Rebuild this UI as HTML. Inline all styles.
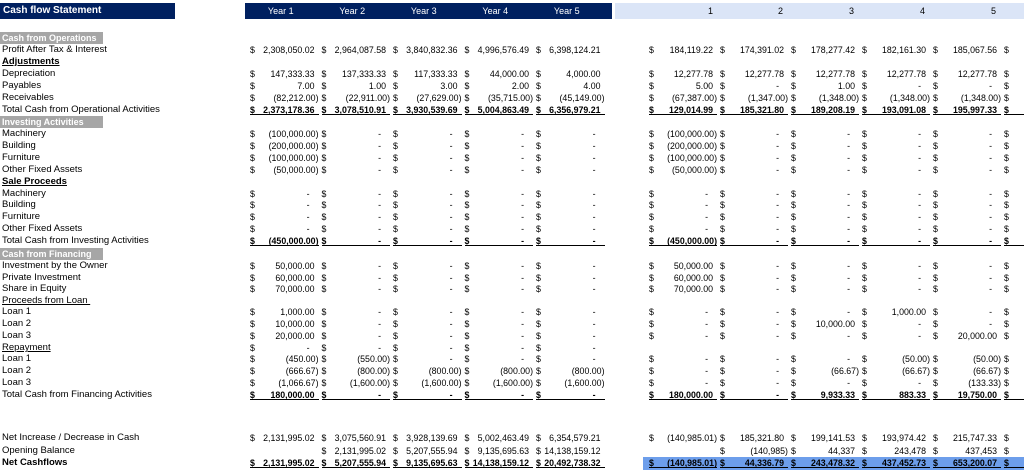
<!DOCTYPE html>
<html><head><meta charset="utf-8"><style>
body{margin:0;width:1024px;height:473px;overflow:hidden;background:#fff;font-family:"Liberation Sans",Arial,sans-serif;font-size:8.8px;color:#000;position:relative}
.r{position:absolute;left:0;height:12px;line-height:12px;display:flex;white-space:nowrap}
.l{width:247px;padding-left:2px;box-sizing:border-box;font-size:9.5px}
.y{width:71.5px;flex:none}
.m{width:71px;flex:none}
.sp{width:41.5px;flex:none}
.c{display:flex;justify-content:space-between;margin-left:3px;padding-right:4px;height:11px;line-height:12px;box-sizing:border-box}
.y .c{width:68.5px}.m .c{width:68px}
.n .c{padding-right:0}
.z .c{padding-right:9px}
.t .c{border-bottom:1px solid #000}
.t{font-weight:bold}
.g{position:absolute;left:0;width:103px;height:12px;background:#a6a6a6;color:#fff;font-weight:bold;line-height:12px;padding-left:2px;box-sizing:border-box;font-size:9px}
.u{font-weight:bold;text-decoration:underline}
.uu{text-decoration:underline}
.hd{position:absolute;top:3px;height:16px;line-height:16px;color:#fff;font-size:9px}
</style></head><body>
<div class="hd" style="left:0;width:175px;background:#002060;font-weight:bold;font-size:10px;padding-left:3px;box-sizing:border-box">Cash flow Statement</div>
<div class="hd" style="left:245px;width:367px;background:#002060;display:flex">
<span style="width:71.5px;text-align:center">Year 1</span><span style="width:71.5px;text-align:center">Year 2</span><span style="width:71.5px;text-align:center">Year 3</span><span style="width:71.5px;text-align:center">Year 4</span><span style="width:71.5px;text-align:center">Year 5</span></div>
<div class="hd" style="left:615px;width:409px;background:#dbe5f7;color:#000;display:flex">
<span style="width:98px;text-align:right">1</span><span style="width:70px;text-align:right">2</span><span style="width:71px;text-align:right">3</span><span style="width:71px;text-align:right">4</span><span style="width:71px;text-align:right">5</span></div>

<div class="g" style="top:32px">Cash from Operations</div>
<div class="r" style="top:44px"><span class="l">Profit After Tax &amp; Interest</span>
<span class="y"><span class="c">$<span>2,308,050.02</span></span></span><span class="y"><span class="c">$<span>2,964,087.58</span></span></span><span class="y"><span class="c">$<span>3,840,832.36</span></span></span><span class="y"><span class="c">$<span>4,996,576.49</span></span></span><span class="y"><span class="c">$<span>6,398,124.21</span></span></span><span class="sp"></span>
<span class="m"><span class="c">$<span>184,119.22</span></span></span><span class="m"><span class="c">$<span>174,391.02</span></span></span><span class="m"><span class="c">$<span>178,277.42</span></span></span><span class="m"><span class="c">$<span>182,161.30</span></span></span><span class="m"><span class="c">$<span>185,067.56</span></span></span><span class="m"><span class="c">$<span>188,067.56</span></span></span></div>
<div class="r" style="top:56px"><span class="l u">Adjustments</span></div>
<div class="r" style="top:68px"><span class="l">Depreciation</span>
<span class="y"><span class="c">$<span>147,333.33</span></span></span><span class="y"><span class="c">$<span>137,333.33</span></span></span><span class="y"><span class="c">$<span>117,333.33</span></span></span><span class="y"><span class="c">$<span>44,000.00</span></span></span><span class="y"><span class="c">$<span>4,000.00</span></span></span><span class="sp"></span>
<span class="m"><span class="c">$<span>12,277.78</span></span></span><span class="m"><span class="c">$<span>12,277.78</span></span></span><span class="m"><span class="c">$<span>12,277.78</span></span></span><span class="m"><span class="c">$<span>12,277.78</span></span></span><span class="m"><span class="c">$<span>12,277.78</span></span></span><span class="m"><span class="c">$<span>12,277.78</span></span></span></div>
<div class="r" style="top:80px"><span class="l">Payables</span>
<span class="y"><span class="c">$<span>7.00</span></span></span><span class="y"><span class="c">$<span>1.00</span></span></span><span class="y"><span class="c">$<span>3.00</span></span></span><span class="y"><span class="c">$<span>2.00</span></span></span><span class="y"><span class="c">$<span>4.00</span></span></span><span class="sp"></span>
<span class="m"><span class="c">$<span>5.00</span></span></span><span class="m z"><span class="c">$<span>-</span></span></span><span class="m"><span class="c">$<span>1.00</span></span></span><span class="m z"><span class="c">$<span>-</span></span></span><span class="m z"><span class="c">$<span>-</span></span></span><span class="m z"><span class="c">$<span>-</span></span></span></div>
<div class="r" style="top:92px"><span class="l">Receivables</span>
<span class="y n"><span class="c">$<span>(82,212.00)</span></span></span><span class="y n"><span class="c">$<span>(22,911.00)</span></span></span><span class="y n"><span class="c">$<span>(27,629.00)</span></span></span><span class="y n"><span class="c">$<span>(35,715.00)</span></span></span><span class="y n"><span class="c">$<span>(45,149.00)</span></span></span><span class="sp"></span>
<span class="m n"><span class="c">$<span>(67,387.00)</span></span></span><span class="m n"><span class="c">$<span>(1,347.00)</span></span></span><span class="m n"><span class="c">$<span>(1,348.00)</span></span></span><span class="m n"><span class="c">$<span>(1,348.00)</span></span></span><span class="m n"><span class="c">$<span>(1,348.00)</span></span></span><span class="m n"><span class="c">$<span>(1,348.00)</span></span></span></div>
<div class="r t" style="top:104px"><span class="l" style="font-weight:normal">Total Cash from Operational Activities</span>
<span class="y"><span class="c">$<span>2,373,178.36</span></span></span><span class="y"><span class="c">$<span>3,078,510.91</span></span></span><span class="y"><span class="c">$<span>3,930,539.69</span></span></span><span class="y"><span class="c">$<span>5,004,863.49</span></span></span><span class="y"><span class="c">$<span>6,356,979.21</span></span></span><span class="sp"></span>
<span class="m"><span class="c">$<span>129,014.99</span></span></span><span class="m"><span class="c">$<span>185,321.80</span></span></span><span class="m"><span class="c">$<span>189,208.19</span></span></span><span class="m"><span class="c">$<span>193,091.08</span></span></span><span class="m"><span class="c">$<span>195,997.33</span></span></span><span class="m"><span class="c">$<span>198,997.33</span></span></span></div>

<div class="g" style="top:116px">Investing Activities</div>
<div class="r" style="top:128px"><span class="l">Machinery</span>
<span class="y n"><span class="c">$<span>(100,000.00)</span></span></span><span class="y z"><span class="c">$<span>-</span></span></span><span class="y z"><span class="c">$<span>-</span></span></span><span class="y z"><span class="c">$<span>-</span></span></span><span class="y z"><span class="c">$<span>-</span></span></span><span class="sp"></span>
<span class="m n"><span class="c">$<span>(100,000.00)</span></span></span><span class="m z"><span class="c">$<span>-</span></span></span><span class="m z"><span class="c">$<span>-</span></span></span><span class="m z"><span class="c">$<span>-</span></span></span><span class="m z"><span class="c">$<span>-</span></span></span><span class="m z"><span class="c">$<span>-</span></span></span></div>
<div class="r" style="top:140px"><span class="l">Building</span>
<span class="y n"><span class="c">$<span>(200,000.00)</span></span></span><span class="y z"><span class="c">$<span>-</span></span></span><span class="y z"><span class="c">$<span>-</span></span></span><span class="y z"><span class="c">$<span>-</span></span></span><span class="y z"><span class="c">$<span>-</span></span></span><span class="sp"></span>
<span class="m n"><span class="c">$<span>(200,000.00)</span></span></span><span class="m z"><span class="c">$<span>-</span></span></span><span class="m z"><span class="c">$<span>-</span></span></span><span class="m z"><span class="c">$<span>-</span></span></span><span class="m z"><span class="c">$<span>-</span></span></span><span class="m z"><span class="c">$<span>-</span></span></span></div>
<div class="r" style="top:152px"><span class="l">Furniture</span>
<span class="y n"><span class="c">$<span>(100,000.00)</span></span></span><span class="y z"><span class="c">$<span>-</span></span></span><span class="y z"><span class="c">$<span>-</span></span></span><span class="y z"><span class="c">$<span>-</span></span></span><span class="y z"><span class="c">$<span>-</span></span></span><span class="sp"></span>
<span class="m n"><span class="c">$<span>(100,000.00)</span></span></span><span class="m z"><span class="c">$<span>-</span></span></span><span class="m z"><span class="c">$<span>-</span></span></span><span class="m z"><span class="c">$<span>-</span></span></span><span class="m z"><span class="c">$<span>-</span></span></span><span class="m z"><span class="c">$<span>-</span></span></span></div>
<div class="r" style="top:164px"><span class="l">Other Fixed Assets</span>
<span class="y n"><span class="c">$<span>(50,000.00)</span></span></span><span class="y z"><span class="c">$<span>-</span></span></span><span class="y z"><span class="c">$<span>-</span></span></span><span class="y z"><span class="c">$<span>-</span></span></span><span class="y z"><span class="c">$<span>-</span></span></span><span class="sp"></span>
<span class="m n"><span class="c">$<span>(50,000.00)</span></span></span><span class="m z"><span class="c">$<span>-</span></span></span><span class="m z"><span class="c">$<span>-</span></span></span><span class="m z"><span class="c">$<span>-</span></span></span><span class="m z"><span class="c">$<span>-</span></span></span><span class="m z"><span class="c">$<span>-</span></span></span></div>
<div class="r" style="top:176px"><span class="l u">Sale Proceeds</span></div>
<div class="r" style="top:187.5px"><span class="l">Machinery</span>
<span class="y z"><span class="c">$<span>-</span></span></span><span class="y z"><span class="c">$<span>-</span></span></span><span class="y z"><span class="c">$<span>-</span></span></span><span class="y z"><span class="c">$<span>-</span></span></span><span class="y z"><span class="c">$<span>-</span></span></span><span class="sp"></span>
<span class="m z"><span class="c">$<span>-</span></span></span><span class="m z"><span class="c">$<span>-</span></span></span><span class="m z"><span class="c">$<span>-</span></span></span><span class="m z"><span class="c">$<span>-</span></span></span><span class="m z"><span class="c">$<span>-</span></span></span><span class="m z"><span class="c">$<span>-</span></span></span></div>
<div class="r" style="top:199px"><span class="l">Building</span>
<span class="y z"><span class="c">$<span>-</span></span></span><span class="y z"><span class="c">$<span>-</span></span></span><span class="y z"><span class="c">$<span>-</span></span></span><span class="y z"><span class="c">$<span>-</span></span></span><span class="y z"><span class="c">$<span>-</span></span></span><span class="sp"></span>
<span class="m z"><span class="c">$<span>-</span></span></span><span class="m z"><span class="c">$<span>-</span></span></span><span class="m z"><span class="c">$<span>-</span></span></span><span class="m z"><span class="c">$<span>-</span></span></span><span class="m z"><span class="c">$<span>-</span></span></span><span class="m z"><span class="c">$<span>-</span></span></span></div>
<div class="r" style="top:211px"><span class="l">Furniture</span>
<span class="y z"><span class="c">$<span>-</span></span></span><span class="y z"><span class="c">$<span>-</span></span></span><span class="y z"><span class="c">$<span>-</span></span></span><span class="y z"><span class="c">$<span>-</span></span></span><span class="y z"><span class="c">$<span>-</span></span></span><span class="sp"></span>
<span class="m z"><span class="c">$<span>-</span></span></span><span class="m z"><span class="c">$<span>-</span></span></span><span class="m z"><span class="c">$<span>-</span></span></span><span class="m z"><span class="c">$<span>-</span></span></span><span class="m z"><span class="c">$<span>-</span></span></span><span class="m z"><span class="c">$<span>-</span></span></span></div>
<div class="r" style="top:222.5px"><span class="l">Other Fixed Assets</span>
<span class="y z"><span class="c">$<span>-</span></span></span><span class="y z"><span class="c">$<span>-</span></span></span><span class="y z"><span class="c">$<span>-</span></span></span><span class="y z"><span class="c">$<span>-</span></span></span><span class="y z"><span class="c">$<span>-</span></span></span><span class="sp"></span>
<span class="m z"><span class="c">$<span>-</span></span></span><span class="m z"><span class="c">$<span>-</span></span></span><span class="m z"><span class="c">$<span>-</span></span></span><span class="m z"><span class="c">$<span>-</span></span></span><span class="m z"><span class="c">$<span>-</span></span></span><span class="m z"><span class="c">$<span>-</span></span></span></div>
<div class="r t" style="top:235px"><span class="l" style="font-weight:normal">Total Cash from Investing Activities</span>
<span class="y n"><span class="c">$<span>(450,000.00)</span></span></span><span class="y z"><span class="c">$<span>-</span></span></span><span class="y z"><span class="c">$<span>-</span></span></span><span class="y z"><span class="c">$<span>-</span></span></span><span class="y z"><span class="c">$<span>-</span></span></span><span class="sp"></span>
<span class="m n"><span class="c">$<span>(450,000.00)</span></span></span><span class="m z"><span class="c">$<span>-</span></span></span><span class="m z"><span class="c">$<span>-</span></span></span><span class="m z"><span class="c">$<span>-</span></span></span><span class="m z"><span class="c">$<span>-</span></span></span><span class="m z"><span class="c">$<span>-</span></span></span></div>

<div class="g" style="top:248px">Cash from Financing</div>
<div class="r" style="top:260px"><span class="l">Investment by the Owner</span>
<span class="y"><span class="c">$<span>50,000.00</span></span></span><span class="y z"><span class="c">$<span>-</span></span></span><span class="y z"><span class="c">$<span>-</span></span></span><span class="y z"><span class="c">$<span>-</span></span></span><span class="y z"><span class="c">$<span>-</span></span></span><span class="sp"></span>
<span class="m"><span class="c">$<span>50,000.00</span></span></span><span class="m z"><span class="c">$<span>-</span></span></span><span class="m z"><span class="c">$<span>-</span></span></span><span class="m z"><span class="c">$<span>-</span></span></span><span class="m z"><span class="c">$<span>-</span></span></span><span class="m z"><span class="c">$<span>-</span></span></span></div>
<div class="r" style="top:272px"><span class="l">Private Investment</span>
<span class="y"><span class="c">$<span>60,000.00</span></span></span><span class="y z"><span class="c">$<span>-</span></span></span><span class="y z"><span class="c">$<span>-</span></span></span><span class="y z"><span class="c">$<span>-</span></span></span><span class="y z"><span class="c">$<span>-</span></span></span><span class="sp"></span>
<span class="m"><span class="c">$<span>60,000.00</span></span></span><span class="m z"><span class="c">$<span>-</span></span></span><span class="m z"><span class="c">$<span>-</span></span></span><span class="m z"><span class="c">$<span>-</span></span></span><span class="m z"><span class="c">$<span>-</span></span></span><span class="m z"><span class="c">$<span>-</span></span></span></div>
<div class="r" style="top:283px"><span class="l">Share in Equity</span>
<span class="y"><span class="c">$<span>70,000.00</span></span></span><span class="y z"><span class="c">$<span>-</span></span></span><span class="y z"><span class="c">$<span>-</span></span></span><span class="y z"><span class="c">$<span>-</span></span></span><span class="y z"><span class="c">$<span>-</span></span></span><span class="sp"></span>
<span class="m"><span class="c">$<span>70,000.00</span></span></span><span class="m z"><span class="c">$<span>-</span></span></span><span class="m z"><span class="c">$<span>-</span></span></span><span class="m z"><span class="c">$<span>-</span></span></span><span class="m z"><span class="c">$<span>-</span></span></span><span class="m z"><span class="c">$<span>-</span></span></span></div>
<div class="r" style="top:294.5px"><span class="l uu">Proceeds from Loan&nbsp;</span></div>
<div class="r" style="top:306px"><span class="l">Loan 1</span>
<span class="y"><span class="c">$<span>1,000.00</span></span></span><span class="y z"><span class="c">$<span>-</span></span></span><span class="y z"><span class="c">$<span>-</span></span></span><span class="y z"><span class="c">$<span>-</span></span></span><span class="y z"><span class="c">$<span>-</span></span></span><span class="sp"></span>
<span class="m z"><span class="c">$<span>-</span></span></span><span class="m z"><span class="c">$<span>-</span></span></span><span class="m z"><span class="c">$<span>-</span></span></span><span class="m"><span class="c">$<span>1,000.00</span></span></span><span class="m z"><span class="c">$<span>-</span></span></span><span class="m z"><span class="c">$<span>-</span></span></span></div>
<div class="r" style="top:318px"><span class="l">Loan 2</span>
<span class="y"><span class="c">$<span>10,000.00</span></span></span><span class="y z"><span class="c">$<span>-</span></span></span><span class="y z"><span class="c">$<span>-</span></span></span><span class="y z"><span class="c">$<span>-</span></span></span><span class="y z"><span class="c">$<span>-</span></span></span><span class="sp"></span>
<span class="m z"><span class="c">$<span>-</span></span></span><span class="m z"><span class="c">$<span>-</span></span></span><span class="m"><span class="c">$<span>10,000.00</span></span></span><span class="m z"><span class="c">$<span>-</span></span></span><span class="m z"><span class="c">$<span>-</span></span></span><span class="m z"><span class="c">$<span>-</span></span></span></div>
<div class="r" style="top:330px"><span class="l">Loan 3</span>
<span class="y"><span class="c">$<span>20,000.00</span></span></span><span class="y z"><span class="c">$<span>-</span></span></span><span class="y z"><span class="c">$<span>-</span></span></span><span class="y z"><span class="c">$<span>-</span></span></span><span class="y z"><span class="c">$<span>-</span></span></span><span class="sp"></span>
<span class="m z"><span class="c">$<span>-</span></span></span><span class="m z"><span class="c">$<span>-</span></span></span><span class="m z"><span class="c">$<span>-</span></span></span><span class="m z"><span class="c">$<span>-</span></span></span><span class="m"><span class="c">$<span>20,000.00</span></span></span><span class="m z"><span class="c">$<span>-</span></span></span></div>
<div class="r" style="top:342px"><span class="l uu">Repayment</span>
<span class="y z"><span class="c">$<span>-</span></span></span><span class="y z"><span class="c">$<span>-</span></span></span><span class="y z"><span class="c">$<span>-</span></span></span><span class="y z"><span class="c">$<span>-</span></span></span><span class="y z"><span class="c">$<span>-</span></span></span></div>
<div class="r" style="top:353px"><span class="l">Loan 1</span>
<span class="y n"><span class="c">$<span>(450.00)</span></span></span><span class="y n"><span class="c">$<span>(550.00)</span></span></span><span class="y z"><span class="c">$<span>-</span></span></span><span class="y z"><span class="c">$<span>-</span></span></span><span class="y z"><span class="c">$<span>-</span></span></span><span class="sp"></span>
<span class="m z"><span class="c">$<span>-</span></span></span><span class="m z"><span class="c">$<span>-</span></span></span><span class="m z"><span class="c">$<span>-</span></span></span><span class="m n"><span class="c">$<span>(50.00)</span></span></span><span class="m n"><span class="c">$<span>(50.00)</span></span></span><span class="m n"><span class="c">$<span>(50.00)</span></span></span></div>
<div class="r" style="top:365px"><span class="l">Loan 2</span>
<span class="y n"><span class="c">$<span>(666.67)</span></span></span><span class="y n"><span class="c">$<span>(800.00)</span></span></span><span class="y n"><span class="c">$<span>(800.00)</span></span></span><span class="y n"><span class="c">$<span>(800.00)</span></span></span><span class="y n"><span class="c">$<span>(800.00)</span></span></span><span class="sp"></span>
<span class="m z"><span class="c">$<span>-</span></span></span><span class="m z"><span class="c">$<span>-</span></span></span><span class="m n"><span class="c">$<span>(66.67)</span></span></span><span class="m n"><span class="c">$<span>(66.67)</span></span></span><span class="m n"><span class="c">$<span>(66.67)</span></span></span><span class="m n"><span class="c">$<span>(66.67)</span></span></span></div>
<div class="r" style="top:377px"><span class="l">Loan 3</span>
<span class="y n"><span class="c">$<span>(1,066.67)</span></span></span><span class="y n"><span class="c">$<span>(1,600.00)</span></span></span><span class="y n"><span class="c">$<span>(1,600.00)</span></span></span><span class="y n"><span class="c">$<span>(1,600.00)</span></span></span><span class="y n"><span class="c">$<span>(1,600.00)</span></span></span><span class="sp"></span>
<span class="m z"><span class="c">$<span>-</span></span></span><span class="m z"><span class="c">$<span>-</span></span></span><span class="m z"><span class="c">$<span>-</span></span></span><span class="m z"><span class="c">$<span>-</span></span></span><span class="m n"><span class="c">$<span>(133.33)</span></span></span><span class="m n"><span class="c">$<span>(133.33)</span></span></span></div>
<div class="r t" style="top:389px"><span class="l" style="font-weight:normal">Total Cash from Financing Activities</span>
<span class="y"><span class="c">$<span>180,000.00</span></span></span><span class="y z"><span class="c">$<span>-</span></span></span><span class="y z"><span class="c">$<span>-</span></span></span><span class="y z"><span class="c">$<span>-</span></span></span><span class="y z"><span class="c">$<span>-</span></span></span><span class="sp"></span>
<span class="m"><span class="c">$<span>180,000.00</span></span></span><span class="m z"><span class="c">$<span>-</span></span></span><span class="m"><span class="c">$<span>9,933.33</span></span></span><span class="m"><span class="c">$<span>883.33</span></span></span><span class="m"><span class="c">$<span>19,750.00</span></span></span><span class="m"><span class="c">$<span>19,750.00</span></span></span></div>

<div class="r" style="top:432px"><span class="l">Net Increase / Decrease in Cash</span>
<span class="y"><span class="c">$<span>2,131,995.02</span></span></span><span class="y"><span class="c">$<span>3,075,560.91</span></span></span><span class="y"><span class="c">$<span>3,928,139.69</span></span></span><span class="y"><span class="c">$<span>5,002,463.49</span></span></span><span class="y"><span class="c">$<span>6,354,579.21</span></span></span><span class="sp"></span>
<span class="m n"><span class="c">$<span>(140,985.01)</span></span></span><span class="m"><span class="c">$<span>185,321.80</span></span></span><span class="m"><span class="c">$<span>199,141.53</span></span></span><span class="m"><span class="c">$<span>193,974.42</span></span></span><span class="m"><span class="c">$<span>215,747.33</span></span></span><span class="m"><span class="c">$<span>115,747.33</span></span></span></div>
<div class="r" style="top:444.5px"><span class="l">Opening Balance</span>
<span class="y"></span><span class="y"><span class="c">$<span>2,131,995.02</span></span></span><span class="y"><span class="c">$<span>5,207,555.94</span></span></span><span class="y"><span class="c">$<span>9,135,695.63</span></span></span><span class="y"><span class="c">$<span>14,138,159.12</span></span></span><span class="sp"></span>
<span class="m"></span><span class="m n"><span class="c">$<span>(140,985)</span></span></span><span class="m"><span class="c">$<span>44,337</span></span></span><span class="m"><span class="c">$<span>243,478</span></span></span><span class="m"><span class="c">$<span>437,453</span></span></span><span class="m"><span class="c">$<span>653,200</span></span></span></div>
<div style="position:absolute;left:643px;top:457px;width:381px;height:13px;background:#6d9eeb"></div>
<div class="r t" style="top:457px"><span class="l">Net Cashflows</span>
<span class="y"><span class="c">$<span>2,131,995.02</span></span></span><span class="y"><span class="c">$<span>5,207,555.94</span></span></span><span class="y"><span class="c">$<span>9,135,695.63</span></span></span><span class="y"><span class="c">$<span>14,138,159.12</span></span></span><span class="y"><span class="c">$<span>20,492,738.32</span></span></span><span class="sp"></span>
<span class="m n"><span class="c">$<span>(140,985.01)</span></span></span><span class="m"><span class="c">$<span>44,336.79</span></span></span><span class="m"><span class="c">$<span>243,478.32</span></span></span><span class="m"><span class="c">$<span>437,452.73</span></span></span><span class="m"><span class="c">$<span>653,200.07</span></span></span><span class="m"><span class="c">$<span>868,947.40</span></span></span></div>
</body></html>
